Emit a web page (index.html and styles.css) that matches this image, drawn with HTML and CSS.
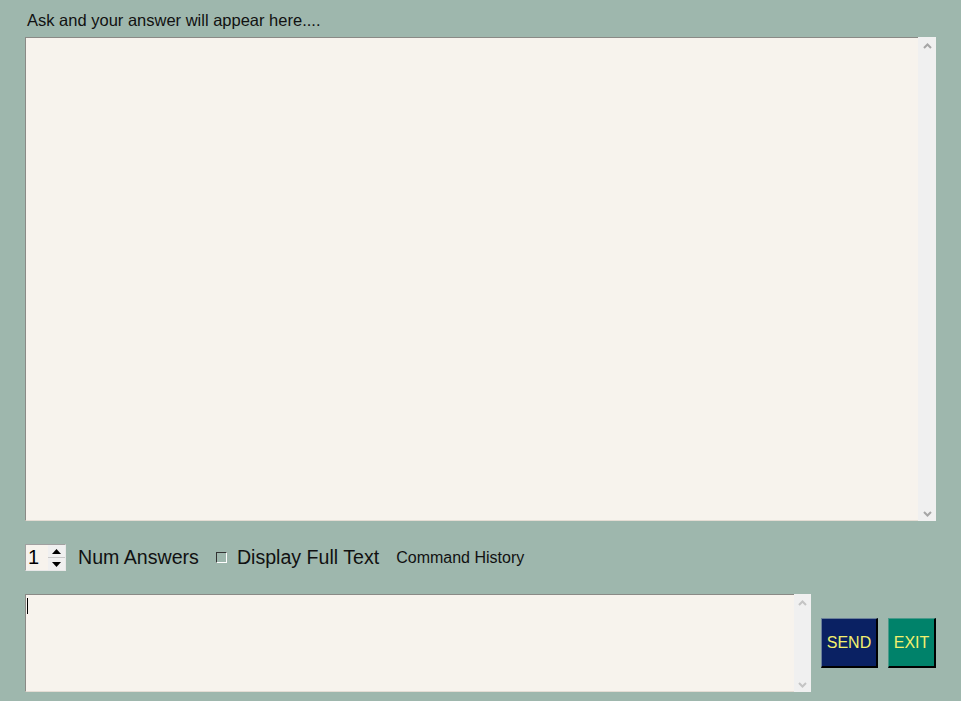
FILE: index.html
```html
<!DOCTYPE html>
<html>
<head>
<meta charset="utf-8">
<link rel="stylesheet" href="styles.css">
</head>
<body>
<div class="app">
  <div class="label">Ask and your answer will appear here....</div>
  <div class="output">
    <div class="output-text"></div>
    <div class="vscroll">
      <svg class="chev" width="9" height="6" viewBox="0 0 9 6"><polyline points="1,5 4.5,1.5 8,5" fill="none" stroke="#a6a6a6" stroke-width="2"/></svg>
      <svg class="chev" width="9" height="6" viewBox="0 0 9 6"><polyline points="1,1 4.5,4.5 8,1" fill="none" stroke="#a6a6a6" stroke-width="2"/></svg>
    </div>
  </div>
  <div class="controls">
    <div class="spin">
      <span class="spin-val">1</span>
      <div class="spin-btns">
        <div class="spin-btn"><svg width="9" height="5" viewBox="0 0 9 5"><polygon points="0,5 4.5,0 9,5" fill="#000"/></svg></div>
        <div class="spin-btn"><svg width="9" height="5" viewBox="0 0 9 5"><polygon points="0,0 4.5,5 9,0" fill="#000"/></svg></div>
      </div>
    </div>
    <span class="big-label num">Num Answers</span>
    <span class="check"></span>
    <span class="big-label">Display Full Text</span>
    <span class="small-label">Command History</span>
  </div>
  <div class="input-row">
    <div class="input">
      <div class="input-text"><span class="caret"></span></div>
      <div class="vscroll small">
        <svg class="chev" width="9" height="6" viewBox="0 0 9 6"><polyline points="1,5 4.5,1.5 8,5" fill="none" stroke="#c4c4c4" stroke-width="2"/></svg>
        <svg class="chev" width="9" height="6" viewBox="0 0 9 6"><polyline points="1,1 4.5,4.5 8,1" fill="none" stroke="#c4c4c4" stroke-width="2"/></svg>
      </div>
    </div>
    <button class="btn send">SEND</button>
    <button class="btn exit">EXIT</button>
  </div>
</div>
</body>
</html>
```

FILE: styles.css
```css
html, body {
  margin: 0;
  padding: 0;
  background: #9eb7ad;
  font-family: "Liberation Sans", Arial, sans-serif;
  color: #000;
}
.app {
  width: 911px;
  padding: 10px 25px 0 25px;
}
.label {
  height: 27px;
  font-size: 16.5px;
  line-height: 20px;
  padding-left: 2px;
  color: #111;
}
.output {
  display: flex;
  height: 484px;
}
.output-text {
  flex: 1;
  background: #f7f3ed;
  border-top: 1px solid #8a8a86;
  border-left: 1px solid #8a8a86;
  border-bottom: 1px solid #e4ddd4;
}
.vscroll {
  width: 18px;
  background: #f0f0f0;
  display: flex;
  flex-direction: column;
  justify-content: space-between;
  align-items: center;
  padding: 6px 0 4px;
  box-sizing: border-box;
}
.vscroll.small {
  width: 17px;
}
.chev { display: block; }
.controls {
  display: flex;
  align-items: center;
  height: 27px;
  margin-top: 23px;
}
.spin {
  display: flex;
  width: 41px;
  height: 27px;
  box-sizing: border-box;
  background: #f7f3ed;
  border-top: 1px solid #a0a0a0;
  border-left: 1px solid #a0a0a0;
  border-bottom: 1px solid #e8e8e8;
  border-right: 1px solid #e8e8e8;
}
.spin-val {
  flex: 1;
  font-size: 20px;
  line-height: 25px;
  padding-left: 2px;
}
.spin-btns {
  width: 17px;
  display: flex;
  flex-direction: column;
  background: #f0f0f0;
}
.spin-btn {
  flex: 1;
  display: flex;
  align-items: center;
  justify-content: center;
}
.spin-btn + .spin-btn {
  border-top: 1px solid #c8c8c8;
}
.big-label {
  font-size: 19.6px;
  line-height: 27px;
  color: #111;
}
.num {
  margin-left: 12px;
}
.check {
  width: 9px;
  height: 9px;
  margin-left: 17px;
  margin-right: 10px;
  border-top: 1px solid #333;
  border-left: 1px solid #333;
  border-right: 1px solid #fff;
  border-bottom: 1px solid #fff;
  background: #9eb7ad;
}
.small-label {
  font-size: 16px;
  margin-left: 17px;
  color: #111;
}
.input-row {
  display: flex;
  align-items: flex-start;
  margin-top: 23px;
}
.input {
  display: flex;
  width: 786px;
  height: 98px;
}
.input-text {
  flex: 1;
  background: #f7f3ed;
  border-top: 1px solid #8a8a86;
  border-left: 1px solid #8a8a86;
  border-bottom: 1px solid #e4ddd4;
  padding: 3px 0 0 1px;
}
.caret {
  display: block;
  width: 1px;
  height: 16px;
  background: #000;
}
.btn {
  margin-top: 24px;
  height: 50px;
  box-sizing: border-box;
  border-top: 1px solid #6a7f9a;
  border-left: 1px solid #6a7f9a;
  border-right: 2px solid #000;
  border-bottom: 2px solid #000;
  font-family: "Liberation Sans", Arial, sans-serif;
  font-size: 16px;
  color: #f3f06e;
  padding: 0;
}
.send {
  margin-left: 10px;
  width: 57px;
  background: #0a2163;
}
.exit {
  margin-left: 10px;
  width: 48px;
  background: #00826a;
  border-top-color: #4a9a8a;
  border-left-color: #4a9a8a;
}
```
